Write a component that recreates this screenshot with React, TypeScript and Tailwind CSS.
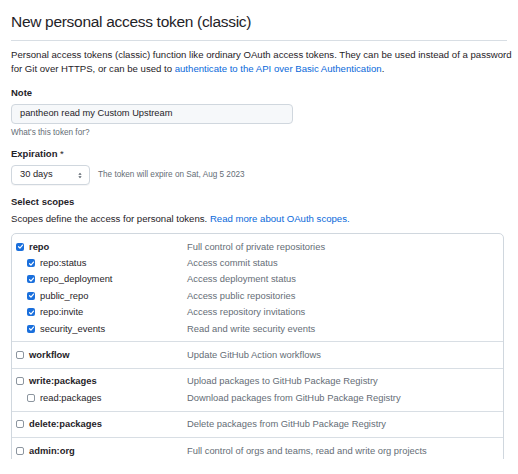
import React from "react";

type Scope = { name: string; desc: string; checked: boolean; sub?: boolean };

const groups: Scope[][] = [
  [
    { name: "repo", desc: "Full control of private repositories", checked: true },
    { name: "repo:status", desc: "Access commit status", checked: true, sub: true },
    { name: "repo_deployment", desc: "Access deployment status", checked: true, sub: true },
    { name: "public_repo", desc: "Access public repositories", checked: true, sub: true },
    { name: "repo:invite", desc: "Access repository invitations", checked: true, sub: true },
    { name: "security_events", desc: "Read and write security events", checked: true, sub: true },
  ],
  [{ name: "workflow", desc: "Update GitHub Action workflows", checked: false }],
  [
    { name: "write:packages", desc: "Upload packages to GitHub Package Registry", checked: false },
    { name: "read:packages", desc: "Download packages from GitHub Package Registry", checked: false, sub: true },
  ],
  [{ name: "delete:packages", desc: "Delete packages from GitHub Package Registry", checked: false }],
  [{ name: "admin:org", desc: "Full control of orgs and teams, read and write org projects", checked: false }],
];

function Box({ checked }: { checked: boolean }) {
  if (checked) {
    return (
      <span className="flex h-[8px] w-[8px] shrink-0 items-center justify-center rounded-[2px] bg-[#1a6fdc]">
        <svg viewBox="0 0 10 10" className="h-[7px] w-[7px]">
          <path d="M2.2 5.3 L4.2 7.2 L7.9 2.9" fill="none" stroke="white" strokeWidth="1.7" strokeLinecap="round" strokeLinejoin="round" />
        </svg>
      </span>
    );
  }
  return <span className="h-[8px] w-[8px] shrink-0 rounded-[2px] border border-[#8c959f] bg-white" />;
}

export default function App() {
  return (
    <div
      className="h-[459px] overflow-hidden bg-white px-[11px] pt-[11px] text-[#1f2328]"
      style={{ fontFamily: '"Liberation Sans", Arial, sans-serif' }}
    >
      <h2 className="border-b border-[#d8dee4] pb-[7px] text-[15.5px] leading-[22px] font-normal tracking-[-0.3px]">
        New personal access token (classic)
      </h2>

      <p className="mt-[7px] w-[507px] text-[9.6px] leading-[14px]">
        Personal access tokens (classic) function like ordinary OAuth access tokens. They can be used instead of a password
        for Git over HTTPS, or can be used to{" "}
        <span className="text-[#0969da]">authenticate to the API over Basic Authentication</span>.
      </p>

      <div className="mt-[10px] text-[9.5px] leading-[14px] font-bold">Note</div>
      <div className="mt-[4px] flex h-[20px] w-[282px] items-center rounded-[4px] border border-[#d0d7de] bg-[#f6f8fa] px-[8px] text-[9.3px]">
        pantheon read my Custom Upstream
      </div>
      <div className="mt-[3px] text-[8.2px] leading-[12px] text-[#656d76]">What's this token for?</div>

      <div className="mt-[8px] text-[9.5px] leading-[14px] font-bold">
        Expiration <span className="font-normal">*</span>
      </div>
      <div className="mt-[4px] flex items-center gap-[8px]">
        <div className="flex h-[20px] w-[79px] items-center justify-between rounded-[4px] border border-[#d0d7de] bg-white pr-[7px] pl-[8px] text-[9.3px] shadow-[0_1px_0_rgba(31,35,40,0.04)]">
          <span>30 days</span>
          <svg viewBox="0 0 6 10" className="h-[7px] w-[4px]">
            <path d="M0.5 4 L3 1 L5.5 4 Z M0.5 6 L3 9 L5.5 6 Z" fill="#57606a" />
          </svg>
        </div>
        <span className="text-[8.2px] text-[#656d76]">The token will expire on Sat, Aug 5 2023</span>
      </div>

      <div className="mt-[10px] text-[9.5px] leading-[14px] font-bold">Select scopes</div>
      <p className="mt-[3px] text-[9.6px] leading-[14px]">
        Scopes define the access for personal tokens.{" "}
        <span className="text-[#0969da]">Read more about OAuth scopes.</span>
      </p>

      <div className="mt-[7px] w-[493px] rounded-[5px] border border-[#d0d7de]">
        {groups.map((g, i) => (
          <div key={i} className={`py-[4.5px] ${i > 0 ? "border-t border-[#d8dee4]" : ""}`}>
            {g.map((s) => (
              <div key={s.name} className="flex h-[16.4px] items-center text-[9.4px]">
                <div className={`flex w-[175px] items-center gap-[5px] ${s.sub ? "pl-[15px]" : "pl-[4px]"}`}>
                  <Box checked={s.checked} />
                  <span className={s.sub ? "" : "font-bold"}>{s.name}</span>
                </div>
                <span className="text-[#656d76]">{s.desc}</span>
              </div>
            ))}
          </div>
        ))}
      </div>
    </div>
  );
}
